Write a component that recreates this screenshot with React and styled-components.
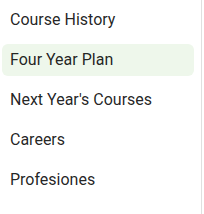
import React from "react";
import styled, { createGlobalStyle } from "styled-components";

const Global = createGlobalStyle`
  html, body { margin: 0; padding: 0; background: #fff; }
  body { font-family: Roboto, "Noto Sans", sans-serif; }
`;

const Sidebar = styled.nav`
  width: 201px;
  height: 214px;
  border-right: 1px solid #e0e0e0;
  display: flex;
  flex-direction: column;
  box-sizing: content-box;
`;

const Item = styled.div`
  height: 32px;
  width: 192px;
  margin: 4px 0 4px 2px;
  padding: 0 0 2px 8px;
  box-sizing: border-box;
  display: flex;
  align-items: center;
  border-radius: 6px;
  font-size: 16px;
  color: rgba(0, 0, 0, 0.87);
  background: ${(p) => (p.$active ? "#eef7eb" : "transparent")};
`;

const items = ["Course History", "Four Year Plan", "Next Year's Courses", "Careers", "Profesiones"];

export default function App() {
  return (
    <>
      <Global />
      <Sidebar>
        {items.map((t) => (
          <Item key={t} $active={t === "Four Year Plan"}>{t}</Item>
        ))}
      </Sidebar>
    </>
  );
}
